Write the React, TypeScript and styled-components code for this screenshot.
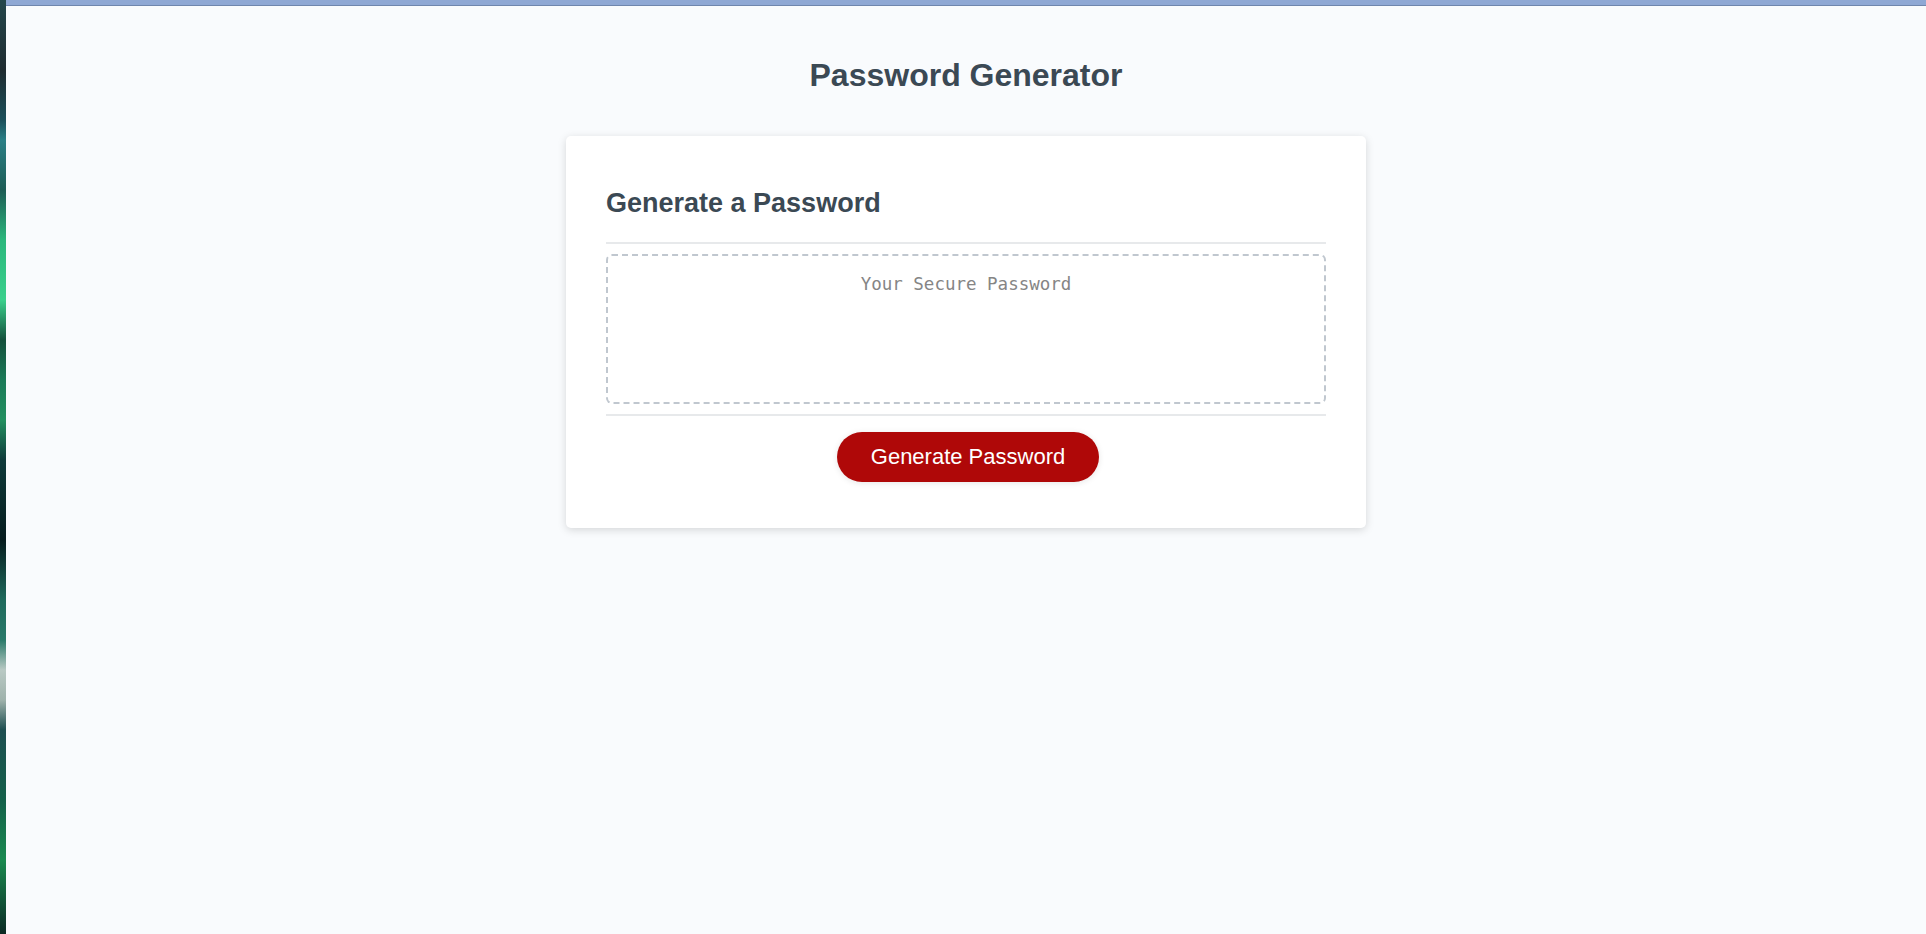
import styled, { createGlobalStyle } from 'styled-components';

const GlobalStyle = createGlobalStyle`
    *,
    *::before,
    *::after {
        box-sizing: border-box;
    }

    html,
    body,
    #root {
        height: 100%;
        margin: 0;
        padding: 0;
    }

    body {
        font-family: "Liberation Sans", Arial, sans-serif;
        background-color: #f9fbfd;
        overflow: hidden;
    }
`;

const Screen = styled.div`
    display: flex;
    height: 934px;
    width: 100%;
`;

// strip of desktop wallpaper peeking in on the left edge
const Wallpaper = styled.div`
    width: 6px;
    flex-shrink: 0;
    background: linear-gradient(
        180deg,
        #24474c 0px,
        #1f2b30 70px,
        #1b4f5a 120px,
        #2a7f86 140px,
        #1d5c55 190px,
        #2bb77c 240px,
        #3ad08c 300px,
        #14503c 340px,
        #1b7a58 380px,
        #239060 420px,
        #0f3a3a 460px,
        #061c1e 540px,
        #1f6a5c 600px,
        #2a7a6a 640px,
        #b9c9c4 670px,
        #9fb2ac 700px,
        #1d4e50 730px,
        #14604a 800px,
        #1a8a50 860px,
        #0b2a24 934px
    );
`;

const Window = styled.div`
    flex: 1;
    display: flex;
    flex-direction: column;
    min-width: 0;
`;

const TopBar = styled.div`
    height: 6px;
    flex-shrink: 0;
    background-color: #8fa8d4;
    border-bottom: 1px solid #6f86ad;
`;

const Wrapper = styled.div`
    flex: 1;
    padding: 30px 20px 0 20px;
`;

const Header = styled.header`
    text-align: center;
    padding: 0 20px 20px 20px;
    color: hsl(206, 17%, 28%);
`;

const Title = styled.h1`
    font-size: 32px;
    font-weight: bold;
    margin: 21.44px 0;
`;

const Card = styled.div`
    background-color: #ffffff;
    border-radius: 5px;
    box-shadow: rgba(0, 0, 0, 0.15) 0px 2px 8px 0px;
    color: hsl(206, 17%, 28%);
    font-size: 18px;
    margin: 0 auto;
    max-width: 800px;
    padding: 30px 40px;
`;

const CardTitle = styled.h2`
    font-size: 27px;
    font-weight: bold;
    margin: 22.41px 0;
`;

const Divider = styled.hr`
    display: block;
    width: 100%;
    height: 2px;
    margin: 0;
    border: none;
    background: #e7e9eb;
`;

const CardBody = styled.div`
    min-height: 100px;
`;

const PasswordBox = styled.textarea`
    appearance: none;
    display: block;
    width: 100%;
    height: 150px;
    padding: 17px 15px 85px 15px;
    margin: 10px 0;
    font-family: "DejaVu Sans Mono", "Liberation Mono", monospace;
    font-size: 17.5px;
    line-height: 22.5px;
    text-align: center;
    color: #333333;
    background: #ffffff;
    border: 2px dashed #c0c7cf;
    border-radius: 6px;
    resize: none;
    overflow: hidden;
    outline: none;

    &::placeholder {
        color: #858585;
    }
`;

const CardFooter = styled.div`
    text-align: center;
`;

const GenerateButton = styled.button`
    border: none;
    background-color: hsl(360, 91%, 36%);
    border-radius: 25px;
    box-shadow: rgba(0, 0, 0, 0.1) 0px 1px 6px 0px;
    color: #ffffff;
    display: inline-block;
    font-family: "Liberation Sans", Arial, sans-serif;
    font-size: 22px;
    line-height: 22px;
    margin: 16px 16px 16px 20px;
    padding: 14px 34px;
    text-align: center;
    cursor: pointer;
`;

function App() {
  return (
    <>
        <GlobalStyle />
        <Screen>
            <Wallpaper />
            <Window>
                <TopBar />
                <Wrapper>
                    <Header>
                        <Title>Password Generator</Title>
                    </Header>

                    <Card>
                        <CardTitle>Generate a Password</CardTitle>
                        <Divider />

                        <CardBody>
                            <PasswordBox
                                readOnly
                                placeholder="Your Secure Password"
                                aria-label="Generated Password"
                            />
                        </CardBody>

                        <Divider />
                        <CardFooter>
                            <GenerateButton>Generate Password</GenerateButton>
                        </CardFooter>
                    </Card>
                </Wrapper>
            </Window>
        </Screen>
    </>
  )
}

export default App;
